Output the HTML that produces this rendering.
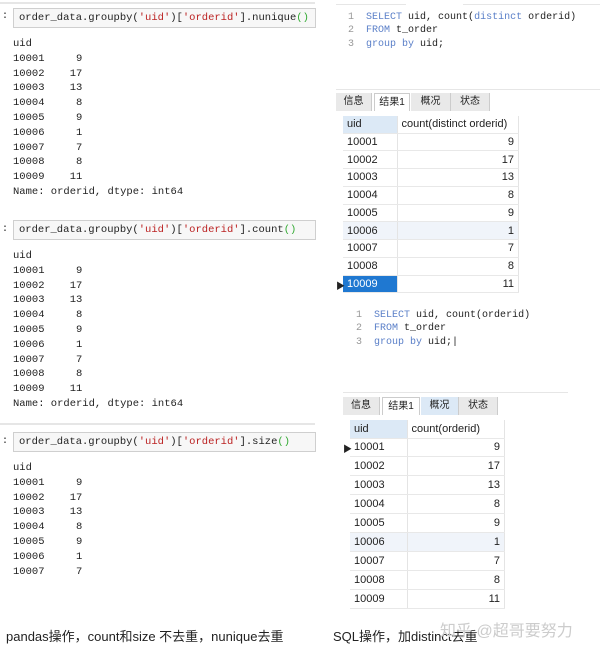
<!DOCTYPE html>
<html><head><meta charset="utf-8"><style>
*{margin:0;padding:0;box-sizing:border-box}
body{width:600px;height:651px;background:#fff;position:relative;overflow:hidden;font-family:"Liberation Mono","Noto Sans CJK SC",monospace;color:#222}
.a{position:absolute;white-space:pre}
.inp{position:absolute;left:13px;width:303px;height:20px;background:#f7f7f7;border:1px solid #cfcfcf;font-size:10.5px;line-height:18px;padding-left:5px;white-space:pre}
.s{color:#b22}.g{color:#3a3}
.out{position:absolute;left:13px;font-size:10.5px;line-height:14.8px;white-space:pre;color:#222}
.sql{position:absolute;font-size:10px;line-height:13.3px;white-space:pre;color:#222}
.k{color:#5a7fc8}.n{color:#999}
.tabs{position:absolute;height:18px;font-family:"Liberation Sans","Noto Sans CJK SC",sans-serif;font-size:10px}
.tabs span{position:absolute;top:0;height:18px;line-height:18px;text-align:center;background:#e9e9e9;border-right:1px solid #ccc}
.tabs span.on{background:#fff;border:1px solid #ccc;border-bottom:none}
table{position:absolute;border-collapse:collapse;font-family:"Liberation Sans",sans-serif;font-size:11px;color:#222}
td{border-bottom:1px solid #e8e8e8;border-right:1px solid #e4e4e4;padding:0 4px}
td.r{text-align:right}
tr.h td{background:#fff}
tr.h td:first-child{background:#dce9f6}
.cap{position:absolute;font-family:"Liberation Sans","Noto Sans CJK SC",sans-serif;font-size:13px;color:#222;white-space:pre}
.line{position:absolute;height:2px;background:#e6e6e6}
</style></head><body>
<div class="line" style="left:0;top:2px;width:315px"></div>
<div class="a" style="left:2px;top:11px;font-size:10px">:</div>
<div class="inp" style="top:8px">order_data.groupby(<span class="s">'uid'</span>)[<span class="s">'orderid'</span>].nunique<span class="g">()</span></div>
<div class="out" style="top:37px">uid
10001     9
10002    17
10003    13
10004     8
10005     9
10006     1
10007     7
10008     8
10009    11
Name: orderid, dtype: int64</div>

<div class="a" style="left:2px;top:224px;font-size:10px">:</div>
<div class="inp" style="top:220px">order_data.groupby(<span class="s">'uid'</span>)[<span class="s">'orderid'</span>].count<span class="g">()</span></div>
<div class="out" style="top:249px">uid
10001     9
10002    17
10003    13
10004     8
10005     9
10006     1
10007     7
10008     8
10009    11
Name: orderid, dtype: int64</div>

<div class="line" style="left:0;top:423px;width:315px"></div>
<div class="a" style="left:2px;top:436px;font-size:10px">:</div>
<div class="inp" style="top:432px">order_data.groupby(<span class="s">'uid'</span>)[<span class="s">'orderid'</span>].size<span class="g">()</span></div>
<div class="out" style="top:461px;height:115px;overflow:hidden">uid
10001     9
10002    17
10003    13
10004     8
10005     9
10006     1
10007     7
10008     8</div>

<div class="cap" style="left:6px;top:626px">pandas操作，count和size 不去重，nunique去重</div>

<div class="line" style="left:336px;top:4px;width:70px;height:1px"></div>
<div class="line" style="left:463px;top:4px;width:137px;height:1px"></div>
<div class="sql" style="left:348px;top:11px"><span class="n">1</span>  <span class="k">SELECT</span> uid, count(<span class="k">distinct</span> orderid)
<span class="n">2</span>  <span class="k">FROM</span> t_order
<span class="n">3</span>  <span class="k">group by</span> uid;</div>
<div class="line" style="left:336px;top:89px;width:264px;height:1px"></div>
<div class="tabs" style="left:336px;top:93px;width:160px">
<span style="left:0;width:36px">信息</span>
<span class="on" style="left:38px;width:36px">结果1</span>
<span style="left:75px;width:40px">概况</span>
<span style="left:115px;width:39px">状态</span>
</div>
<table style="left:343px;top:116px;width:176px">
<tr class="h" style="height:17px"><td style="width:54px">uid</td><td>count(distinct orderid)</td></tr>
<tr style="height:17.75px"><td>10001</td><td class="r">9</td></tr>
<tr style="height:17.75px"><td>10002</td><td class="r">17</td></tr>
<tr style="height:17.75px"><td>10003</td><td class="r">13</td></tr>
<tr style="height:17.75px"><td>10004</td><td class="r">8</td></tr>
<tr style="height:17.75px"><td>10005</td><td class="r">9</td></tr>
<tr style="height:17.75px;background:#f0f4fa"><td>10006</td><td class="r">1</td></tr>
<tr style="height:17.75px"><td>10007</td><td class="r">7</td></tr>
<tr style="height:17.75px"><td>10008</td><td class="r">8</td></tr>
<tr style="height:17.75px"><td style="background:#1f78d1;color:#fff">10009</td><td class="r">11</td></tr>
</table>
<div class="a" style="left:336px;top:279px;font-size:9px">▶</div>

<div class="sql" style="left:356px;top:309px"><span class="n">1</span>  <span class="k">SELECT</span> uid, count(orderid)
<span class="n">2</span>  <span class="k">FROM</span> t_order
<span class="n">3</span>  <span class="k">group by</span> uid;|</div>
<div class="line" style="left:343px;top:392px;width:225px;height:1px"></div>
<div class="tabs" style="left:343px;top:397px;width:160px">
<span style="left:0;width:37px">信息</span>
<span class="on" style="left:39px;width:38px">结果1</span>
<span style="left:78px;width:38px;background:#dce9f6">概况</span>
<span style="left:116px;width:39px">状态</span>
</div>
<table style="left:350px;top:420px;width:155px">
<tr class="h" style="height:18px"><td style="width:57px">uid</td><td>count(orderid)</td></tr>
<tr style="height:18.9px"><td>10001</td><td class="r">9</td></tr>
<tr style="height:18.9px"><td>10002</td><td class="r">17</td></tr>
<tr style="height:18.9px"><td>10003</td><td class="r">13</td></tr>
<tr style="height:18.9px"><td>10004</td><td class="r">8</td></tr>
<tr style="height:18.9px"><td>10005</td><td class="r">9</td></tr>
<tr style="height:18.9px;background:#f0f4fa"><td>10006</td><td class="r">1</td></tr>
<tr style="height:18.9px"><td>10007</td><td class="r">7</td></tr>
<tr style="height:18.9px"><td>10008</td><td class="r">8</td></tr>
<tr style="height:18.9px"><td>10009</td><td class="r">11</td></tr>
</table>
<div class="a" style="left:343px;top:442px;font-size:9px">▶</div>

<div class="cap" style="left:333px;top:626px">SQL操作，加distinct去重</div>
<div class="cap" style="left:440px;top:617px;font-size:16px;color:#ccc">知乎 @超哥要努力</div>
</body></html>
